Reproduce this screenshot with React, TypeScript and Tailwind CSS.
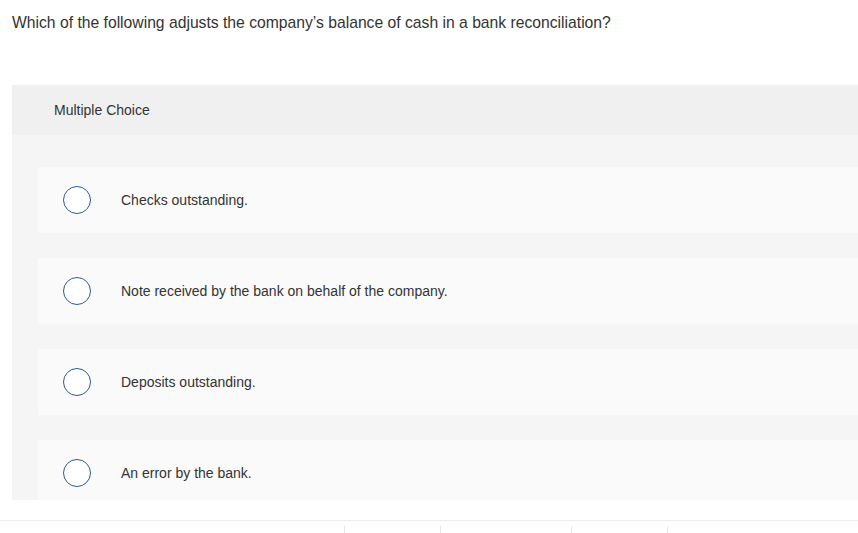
const choices = [
  "Checks outstanding.",
  "Note received by the bank on behalf of the company.",
  "Deposits outstanding.",
  "An error by the bank.",
];

function Radio() {
  return (
    <span className="block h-[28px] w-[28px] flex-none rounded-full border-[1.5px] border-[#2b5c96] bg-white" />
  );
}

export default function App() {
  return (
    <div
      className="h-[533px] w-[858px] overflow-hidden bg-white text-[#333]"
      style={{ fontFamily: '"Liberation Sans", Arial, sans-serif' }}
    >
      <p className="h-[85px] pl-[12px] pt-[13px] text-[15.7px] leading-[19px]">
        Which of the following adjusts the company’s balance of cash in a bank reconciliation?
      </p>

      <section className="ml-[12px] h-[415px] overflow-hidden">
        <div className="flex h-[50px] items-center bg-[#f0f0f0] pl-[42px] text-[14px]">
          Multiple Choice
        </div>
        <div className="flex h-[365px] flex-col gap-[25px] bg-[#f5f5f5] pl-[26px] pt-[32px]">
          {choices.map((choice) => (
            <div
              key={choice}
              className="flex h-[66px] flex-none items-center gap-[30px] bg-[#fafafa] pl-[25px] text-[14px]"
            >
              <Radio />
              <span>{choice}</span>
            </div>
          ))}
        </div>
      </section>

      <div className="mt-[20px] flex h-[13px] border-t border-[#ececec] pt-[5px]">
        <span className="ml-[344px] w-px bg-[#e6e6e6]" />
        <span className="ml-[95px] w-px bg-[#e6e6e6]" />
        <span className="ml-[130px] w-px bg-[#e6e6e6]" />
        <span className="ml-[95px] w-px bg-[#e6e6e6]" />
      </div>
    </div>
  );
}
